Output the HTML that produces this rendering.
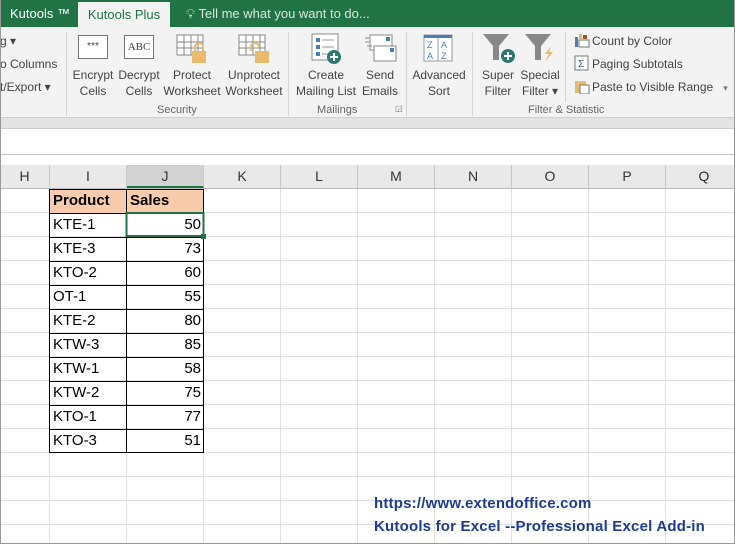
<!DOCTYPE html>
<html><head><meta charset="utf-8"><style>
*{margin:0;padding:0;box-sizing:border-box}
body{width:735px;height:544px;overflow:hidden;background:#fff;font-family:"Liberation Sans",sans-serif;position:relative}
.a{position:absolute}
.rt{font-size:12px;color:#444;text-align:center;line-height:16px;white-space:nowrap}
.gl{font-size:11px;color:#666}
.sep{position:absolute;width:1px;background:#d5d5d5;top:32px;height:84px}
.ch{position:absolute;top:165px;height:23px;font-size:14px;color:#333;text-align:center;line-height:23px;border-right:1px solid #c8c8c8}
.cell{position:absolute;height:24px;font-size:15px;line-height:24px;color:#000;padding:0 3px}
</style></head><body>
<div class="a" style="left:0;top:0;width:735px;height:27px;background:#217346"></div>
<div class="a" style="left:10px;top:6px;color:#fff;font-size:13px">Kutools ™</div>
<div class="a" style="left:78px;top:2px;width:92px;height:25px;background:#f3f3f3;color:#217346;font-size:13px;text-align:center;line-height:25px">Kutools Plus</div>
<div class="a" style="left:186px;top:6px;color:#d7e8dd;font-size:13px">&#x1F4A1;︎ Tell me what you want to do...</div>
<div class="a" style="left:0;top:27px;width:735px;height:91px;background:#f3f3f3"></div>
<div class="a" style="left:0;top:117px;width:735px;height:12px;background:#e4e4e4;border-top:1px solid #d0d0d0;border-bottom:1px solid #cfcfcf"></div>
<div class="a rt" style="left:0;top:33px;text-align:left">g ▾</div>
<div class="a rt" style="left:0;top:56px;text-align:left">o Columns</div>
<div class="a rt" style="left:0;top:79px;text-align:left">t/Export ▾</div>
<div class="sep" style="left:66px"></div>
<div class="sep" style="left:288px"></div>
<div class="sep" style="left:406px"></div>
<div class="sep" style="left:472px"></div>
<div class="sep" style="left:565px;height:70px"></div>
<div class="a" style="left:78px;top:35px;width:30px;height:24px;border:1px solid #777;background:#fff;font-size:10px;text-align:center;line-height:22px;color:#444">***</div>
<div class="a" style="left:124px;top:35px;width:30px;height:24px;border:1px solid #777;background:#fff;font-family:'Liberation Serif',serif;font-size:11px;text-align:center;line-height:22px;color:#444">ABC</div>
<svg class="a" style="left:175px;top:34px" width="34" height="30"><g fill="#fff" stroke="#888"><rect x="2" y="1" width="26" height="20"/><path d="M2 8h26M2 14h26M9 1v20M16 1v20M23 1v20" fill="none"/></g><rect x="17" y="17" width="14" height="12" fill="#e9b96e"/><path d="M20 17v-4a4 4 0 0 1 8 0v4" fill="none" stroke="#e9b96e" stroke-width="2"/></svg>
<svg class="a" style="left:237px;top:34px" width="34" height="30"><g fill="#fff" stroke="#888"><rect x="2" y="1" width="26" height="20"/><path d="M2 8h26M2 14h26M9 1v20M16 1v20M23 1v20" fill="none"/></g><rect x="18" y="17" width="14" height="12" fill="#e9b96e"/><path d="M14 17v-4a4 4 0 0 1 8 0" fill="none" stroke="#e9b96e" stroke-width="2"/></svg>
<div class="a rt" style="left:70px;top:67px;width:46px">Encrypt<br>Cells</div>
<div class="a rt" style="left:116px;top:67px;width:46px">Decrypt<br>Cells</div>
<div class="a rt" style="left:163px;top:67px;width:58px">Protect<br>Worksheet</div>
<div class="a rt" style="left:224px;top:67px;width:60px">Unprotect<br>Worksheet</div>
<div class="a gl" style="left:157px;top:104px">Security</div>
<svg class="a" style="left:310px;top:33px" width="34" height="32"><rect x="2" y="1" width="26" height="26" fill="#fff" stroke="#888"/><g fill="#4a7ebb"><rect x="6" y="5" width="4" height="4"/><rect x="6" y="12" width="4" height="4"/><rect x="6" y="19" width="4" height="4"/></g><path d="M12 7h12M12 14h12M12 21h8" stroke="#999"/><circle cx="24" cy="24" r="7" fill="#2c7873"/><path d="M24 20v8M20 24h8" stroke="#fff" stroke-width="2"/></svg>
<svg class="a" style="left:364px;top:33px" width="34" height="32"><rect x="6" y="2" width="22" height="15" fill="#fff" stroke="#888"/><rect x="22" y="4" width="4" height="4" fill="#4a7ebb"/><rect x="10" y="13" width="22" height="15" fill="#fff" stroke="#888"/><rect x="26" y="15" width="4" height="4" fill="#4a7ebb"/><path d="M1 5h4M1 9h4M3 13h5" stroke="#888"/></svg>
<div class="a rt" style="left:292px;top:67px;width:68px">Create<br>Mailing List</div>
<div class="a rt" style="left:361px;top:67px;width:38px">Send<br>Emails</div>
<div class="a gl" style="left:317px;top:104px">Mailings</div>
<div class="a" style="left:395px;top:104px;font-size:8px;color:#777">◲</div>
<svg class="a" style="left:423px;top:34px" width="30" height="28"><rect x="1" y="1" width="28" height="26" fill="#fff" stroke="#999"/><rect x="1" y="1" width="28" height="3" fill="#4a7ebb"/><path d="M15 4v23" stroke="#999"/><text x="4" y="14" font-size="9" fill="#4a7ebb" font-family="Liberation Sans">Z</text><text x="4" y="25" font-size="9" fill="#4a7ebb" font-family="Liberation Sans">A</text><text x="18" y="14" font-size="9" fill="#4a7ebb" font-family="Liberation Sans">A</text><text x="18" y="25" font-size="9" fill="#4a7ebb" font-family="Liberation Sans">Z</text></svg>
<div class="a rt" style="left:410px;top:67px;width:58px">Advanced<br>Sort</div>
<svg class="a" style="left:482px;top:33px" width="34" height="30"><path d="M1 1h26l-10 12v14h-6v-14z" fill="#888"/><circle cx="26" cy="23" r="7" fill="#2c7873"/><path d="M26 19v8M22 23h8" stroke="#fff" stroke-width="2"/></svg>
<svg class="a" style="left:524px;top:33px" width="34" height="30"><path d="M1 1h26l-10 12v14h-6v-14z" fill="#888"/><path d="M27 13l-6 8h4l-4 8 8-10h-4z" fill="#e9b96e"/></svg>
<div class="a rt" style="left:480px;top:67px;width:36px">Super<br>Filter</div>
<div class="a rt" style="left:518px;top:67px;width:44px">Special<br>Filter ▾</div>
<svg class="a" style="left:574px;top:32px" width="16" height="16"><rect x="1" y="5" width="3" height="10" fill="#4a7ebb"/><rect x="5" y="2" width="3" height="5" fill="#e9b96e"/><rect x="9" y="3" width="4" height="4" fill="#a0522d"/><rect x="5" y="8" width="10" height="7" fill="#fff" stroke="#777"/></svg>
<svg class="a" style="left:574px;top:55px" width="16" height="16"><rect x="1" y="1" width="13" height="14" fill="#fff" stroke="#777"/><text x="4" y="12" font-size="10" fill="#2c5aa0">Σ</text></svg>
<svg class="a" style="left:574px;top:78px" width="16" height="16"><rect x="1" y="3" width="11" height="12" fill="#e9b96e"/><rect x="6" y="7" width="9" height="9" fill="#fff" stroke="#777"/></svg>
<div class="a rt" style="left:592px;top:33px;text-align:left">Count by Color</div>
<div class="a rt" style="left:592px;top:56px;text-align:left">Paging Subtotals</div>
<div class="a rt" style="left:592px;top:79px;text-align:left">Paste to Visible Range &nbsp;&nbsp;<span style="font-size:9px;color:#777">▾</span></div>
<div class="a gl" style="left:528px;top:104px">Filter &amp; Statistic</div>
<div class="a" style="left:0;top:154px;width:735px;height:1px;background:#c6c6c6"></div>
<div class="a" style="left:0;top:165px;width:735px;height:24px;background:#e9e9e9;border-bottom:1px solid #bdbdbd"></div>
<div class="ch" style="left:0;width:50px">H</div>
<div class="ch" style="left:50px;width:77px">I</div>
<div class="ch" style="left:127px;width:77px;background:#d2d2d2;border-bottom:2px solid #217346">J</div>
<div class="ch" style="left:204px;width:77px">K</div>
<div class="ch" style="left:281px;width:77px">L</div>
<div class="ch" style="left:358px;width:77px">M</div>
<div class="ch" style="left:435px;width:77px">N</div>
<div class="ch" style="left:512px;width:77px">O</div>
<div class="ch" style="left:589px;width:77px">P</div>
<div class="ch" style="left:666px;width:77px">Q</div>
<svg class="a" style="left:0;top:189px" width="735" height="355"><g stroke="#e0e0e0"><path d="M49.5 0v355M126.5 0v355M203.5 0v355M280.5 0v355M357.5 0v355M434.5 0v355M511.5 0v355M588.5 0v355M665.5 0v355"/><path d="M0 23.5h735M0 47.5h735M0 71.5h735M0 95.5h735M0 119.5h735M0 143.5h735M0 167.5h735M0 191.5h735M0 215.5h735M0 239.5h735M0 263.5h735M0 287.5h735M0 311.5h735M0 335.5h735"/></g>
<rect x="49.5" y="0.5" width="154" height="24" fill="#f8cbad"/>
<g stroke="#000" fill="none"><rect x="49.5" y="0.5" width="154" height="263"/><path d="M126.5 0v264M49 24.5h155M49 48.5h155M49 72.5h155M49 96.5h155M49 120.5h155M49 144.5h155M49 168.5h155M49 192.5h155M49 216.5h155M49 240.5h155"/></g>
<rect x="126.5" y="24" width="77" height="23" fill="none" stroke="#217346" stroke-width="2"/><rect x="201" y="45" width="5" height="5" fill="#217346"/>
</svg>
<div class="cell" style="left:50px;top:189px;font-weight:bold">Product</div>
<div class="cell" style="left:127px;top:189px;font-weight:bold">Sales</div>
<div class="cell" style="left:50px;top:213px">KTE-1</div><div class="cell" style="left:127px;top:213px;width:77px;text-align:right">50</div>
<div class="cell" style="left:50px;top:237px">KTE-3</div><div class="cell" style="left:127px;top:237px;width:77px;text-align:right">73</div>
<div class="cell" style="left:50px;top:261px">KTO-2</div><div class="cell" style="left:127px;top:261px;width:77px;text-align:right">60</div>
<div class="cell" style="left:50px;top:285px">OT-1</div><div class="cell" style="left:127px;top:285px;width:77px;text-align:right">55</div>
<div class="cell" style="left:50px;top:309px">KTE-2</div><div class="cell" style="left:127px;top:309px;width:77px;text-align:right">80</div>
<div class="cell" style="left:50px;top:333px">KTW-3</div><div class="cell" style="left:127px;top:333px;width:77px;text-align:right">85</div>
<div class="cell" style="left:50px;top:357px">KTW-1</div><div class="cell" style="left:127px;top:357px;width:77px;text-align:right">58</div>
<div class="cell" style="left:50px;top:381px">KTW-2</div><div class="cell" style="left:127px;top:381px;width:77px;text-align:right">75</div>
<div class="cell" style="left:50px;top:405px">KTO-1</div><div class="cell" style="left:127px;top:405px;width:77px;text-align:right">77</div>
<div class="cell" style="left:50px;top:429px">KTO-3</div><div class="cell" style="left:127px;top:429px;width:77px;text-align:right">51</div>
<div class="a" style="left:374px;top:492px;font-size:15px;font-weight:bold;color:#1f3a93;line-height:23px;white-space:nowrap;letter-spacing:0.2px">https://www.extendoffice.com<br>Kutools for Excel --Professional Excel Add-in</div>
<div class="a" style="left:0;top:0;width:735px;height:544px;border:1px solid #999;border-top:none"></div>
</body></html>
